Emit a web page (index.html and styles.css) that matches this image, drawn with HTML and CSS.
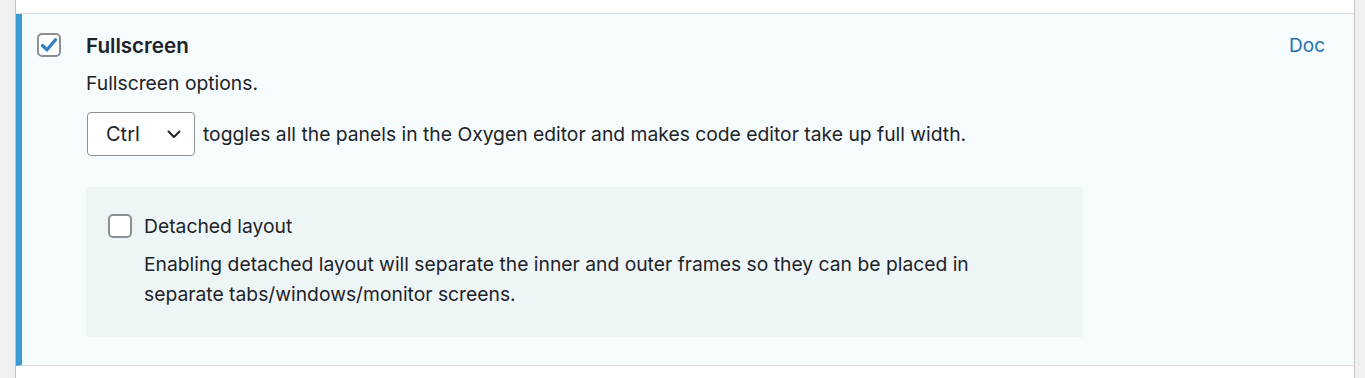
FILE: index.html
```html
<!DOCTYPE html>
<html>
<head>
<meta charset="utf-8">
<link rel="stylesheet" href="styles.css">
</head>
<body>
<div class="wrap">
  <div class="top-row"></div>
  <div class="row">
    <div class="head">
      <span class="cb checked">
        <svg width="20" height="20" viewBox="0 0 20 20"><path d="M3.5 10.5 L8 14.8 L16.5 4.8" fill="none" stroke="#2f7fc0" stroke-width="3.2" stroke-linecap="round" stroke-linejoin="round"/></svg>
      </span>
      <span class="title">Fullscreen</span>
      <a class="doc" href="#">Doc</a>
    </div>
    <div class="body">
      <p class="desc">Fullscreen options.</p>
      <div class="select-line">
        <div class="select">
          <span>Ctrl</span>
          <svg width="14" height="9" viewBox="0 0 14 9"><path d="M1.5 1.5 L7 7 L12.5 1.5" fill="none" stroke="#1d2327" stroke-width="2" stroke-linecap="round" stroke-linejoin="round"/></svg>
        </div>
        <span class="select-text">toggles all the panels in the Oxygen editor and makes code editor take up full width.</span>
      </div>
      <div class="sub">
        <div class="sub-head">
          <span class="cb"></span>
          <span class="sub-title">Detached layout</span>
        </div>
        <p class="sub-desc">Enabling detached layout will separate the inner and outer frames so they can be placed in<br>separate tabs/windows/monitor screens.</p>
      </div>
    </div>
  </div>
  <div class="bottom-row"></div>
</div>
</body>
</html>
```
FILE: styles.css
```css
html, body { margin: 0; padding: 0; }
body {
  background: #f0f0f1;
  font-family: Inter, "Noto Sans", sans-serif;
  color: #1d2327;
  height: 378px;
  overflow: hidden;
}
.wrap {
  margin-left: 15px;
  width: 1338px;
  border-left: 1px solid #c3c4c7;
  border-right: 1px solid #c3c4c7;
  background: #fff;
  height: 378px;
}
.top-row {
  height: 13px;
  border-bottom: 1px solid #dcdcde;
}
.row {
  background: #f6fbfe;
  border-left: 6px solid #3d9bd3;
  border-bottom: 1px solid #dcdcde;
  height: 352px;
  box-sizing: border-box;
  padding: 19px 29px 0 15px;
}
.head {
  display: flex;
  align-items: center;
  height: 24px;
}
.cb {
  width: 24px;
  height: 24px;
  box-sizing: border-box;
  border: 2px solid #8c8f94;
  border-radius: 5px;
  background: #fff;
  display: flex;
  align-items: center;
  justify-content: center;
  flex: none;
}
.title {
  margin-left: 25px;
  font-size: 20.6px;
  font-weight: 600;
  flex: 1;
}
.doc {
  color: #2271b1;
  text-decoration: none;
  font-size: 19px;
}
.body {
  padding-left: 49px;
}
.desc {
  margin: 14px 0 0;
  font-size: 19.3px;
  line-height: 24px;
}
.select-line {
  display: flex;
  align-items: center;
  margin-top: 17px;
  margin-left: 1px;
}
.select {
  width: 108px;
  height: 44px;
  box-sizing: border-box;
  border: 1px solid #8c8f94;
  border-radius: 4px;
  background: #fff;
  display: flex;
  align-items: center;
  justify-content: space-between;
  padding: 0 13px 0 18px;
  font-size: 20px;
}
.select-text {
  margin-left: 8px;
  font-size: 19.3px;
}
.sub {
  margin-top: 31px;
  width: 997px;
  height: 150px;
  box-sizing: border-box;
  background: #eef5f7;
  padding: 27px 22px 0;
}
.sub-head {
  display: flex;
  align-items: center;
  height: 24px;
}
.sub-title {
  margin-left: 12px;
  font-size: 19.3px;
}
.sub-desc {
  margin: 11px 0 0 36px;
  font-size: 19.3px;
  line-height: 30px;
}
```
